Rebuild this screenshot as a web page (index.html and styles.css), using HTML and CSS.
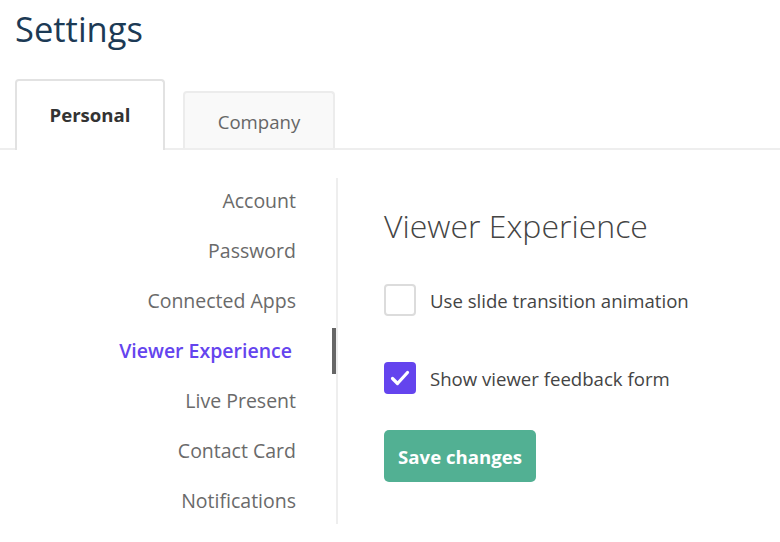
FILE: index.html
```html
<!DOCTYPE html>
<html>
<head>
<meta charset="utf-8">
<link rel="stylesheet" href="styles.css">
</head>
<body>
<h1 class="title">Settings</h1>
<div class="tabs">
  <div class="tab tab-active">Personal</div>
  <div class="tab tab-inactive">Company</div>
</div>
<div class="main">
  <ul class="sidenav">
    <li class="nav-item">Account</li>
    <li class="nav-item">Password</li>
    <li class="nav-item">Connected Apps</li>
    <li class="nav-item nav-active">Viewer Experience</li>
    <li class="nav-item">Live Present</li>
    <li class="nav-item">Contact Card</li>
    <li class="nav-item">Notifications</li>
  </ul>
  <div class="content">
    <h2 class="heading">Viewer Experience</h2>
    <label class="option">
      <span class="checkbox"></span>
      <span class="option-label">Use slide transition animation</span>
    </label>
    <label class="option option-second">
      <span class="checkbox checkbox-checked">
        <svg width="32" height="32" viewBox="0 0 32 32"><path d="M8.5 16.5 L13.5 21.5 L23.5 10.5" fill="none" stroke="#fff" stroke-width="3.2" stroke-linecap="round" stroke-linejoin="round"/></svg>
      </span>
      <span class="option-label">Show viewer feedback form</span>
    </label>
    <button class="save">Save changes</button>
  </div>
</div>
</body>
</html>
```
FILE: styles.css
```css
* { box-sizing: border-box; }
body {
  margin: 0;
  font-family: "Open Sans", "Noto Sans", sans-serif;
  background: #fff;
  color: #555;
}
.title {
  margin: 0;
  padding: 7px 0 0 15px;
  font-size: 34.5px;
  font-weight: 400;
  line-height: 44px;
  color: #1c3a55;
}
.tabs {
  display: flex;
  align-items: flex-end;
  gap: 18px;
  margin-top: 28px;
  padding-left: 15px;
  border-bottom: 2px solid #eee;
  height: 71px;
}
.tab {
  display: flex;
  align-items: center;
  justify-content: center;
  font-size: 18.6px;
  border: 2px solid #e2e2e2;
  border-bottom: none;
  border-radius: 4px 4px 0 0;
}
.tab-active {
  width: 150px;
  height: 71px;
  margin-bottom: -2px;
  padding-bottom: 2px;
  background: #fff;
  font-weight: 700;
  color: #333;
}
.tab-inactive {
  width: 152px;
  height: 57px;
  padding-top: 1px;
  background: #f9f9f9;
  border-color: #ececec;
  color: #666;
}
.main {
  display: flex;
  margin-top: 28px;
}
.sidenav {
  list-style: none;
  margin: 0;
  padding: 0;
  width: 338px;
  border-right: 2px solid #eee;
}
.nav-item {
  position: relative;
  text-align: right;
  padding-right: 40px;
  font-size: 19.5px;
  line-height: 46px;
  margin-bottom: 4px;
  color: #6a6a6a;
}
.nav-item:last-child { margin-bottom: 0; }
.nav-active {
  color: #6444ee;
  font-weight: 600;
  padding-right: 44px;
}
.nav-active::after {
  content: "";
  position: absolute;
  right: 0;
  top: 0;
  width: 4px;
  height: 46px;
  background: #666;
}
.content {
  padding-left: 46px;
}
.heading {
  margin: 28px 0 0;
  font-size: 32px;
  font-weight: 300;
  line-height: 40px;
  color: #444;
}
.option {
  display: flex;
  align-items: center;
  gap: 14px;
  margin-top: 38px;
}
.option-second { margin-top: 46px; }
.checkbox {
  width: 32px;
  height: 32px;
  border: 2px solid #dcdcdc;
  border-radius: 4px;
  flex: none;
  display: flex;
}
.checkbox-checked {
  border: none;
  background: #6444ee;
}
.option-label {
  font-size: 18.6px;
  color: #444;
}
.save {
  display: block;
  margin-top: 36px;
  width: 152px;
  height: 52px;
  border: none;
  border-radius: 5px;
  background: #52b093;
  color: #fff;
  font-family: "Open Sans", "Noto Sans", sans-serif;
  font-size: 18.6px;
  font-weight: 700;
  padding: 0;
}
```
